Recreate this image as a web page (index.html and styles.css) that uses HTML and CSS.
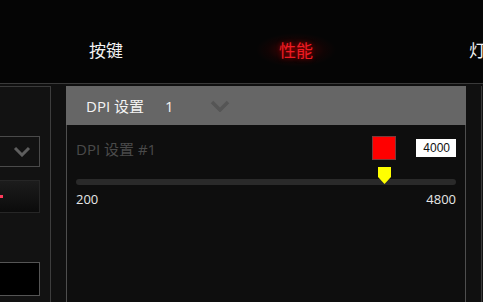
FILE: index.html
```html
<!DOCTYPE html>
<html lang="zh-CN">
<head>
    <meta charset="UTF-8">
    <title>性能</title>
    <link rel="stylesheet" href="styles.css">
</head>
<body>
    <header class="topbar">
        <nav class="tabs">
            <a class="tab">按键</a>
            <a class="tab active">性能</a>
            <a class="tab">灯光</a>
        </nav>
    </header>

    <main class="content">
        <aside class="side">
            <div class="side-select">
                <svg width="18" height="11" viewBox="0 0 18 11"><polyline points="2,2 9,9 16,2" fill="none" stroke="#5e5e5e" stroke-width="3"/></svg>
            </div>
            <div class="side-btn"><span class="dot"></span></div>
            <div class="side-box"></div>
        </aside>

        <section class="panel">
            <div class="panel-head">
                <span class="head-label">DPI 设置</span>
                <span class="head-num">1</span>
                <svg class="head-chev" width="20" height="12" viewBox="0 0 20 12"><polyline points="2,2 10,10 18,2" fill="none" stroke="#555" stroke-width="3.5"/></svg>
            </div>
            <div class="panel-body">
                <div class="dpi-row">
                    <span class="dpi-title">DPI 设置 #1</span>
                    <span class="swatch"></span>
                    <span class="dpi-input">4000</span>
                </div>
                <div class="slider">
                    <div class="track"></div>
                    <svg class="thumb" style="left: 302px;" width="13" height="17" viewBox="0 0 13 17"><polygon points="0,0 13,0 13,10 6.5,17 0,10" fill="#ffff00"/></svg>
                </div>
                <div class="range">
                    <span>200</span>
                    <span>4800</span>
                </div>
            </div>
        </section>

        <aside class="side-right"></aside>
    </main>
</body>
</html>
```

FILE: styles.css
```css
* {
    margin: 0;
    padding: 0;
    box-sizing: border-box;
}

body {
    width: 483px;
    height: 302px;
    overflow: hidden;
    background: #101010;
    font-family: 'Open Sans', 'Noto Sans CJK SC', sans-serif;
    color: #eee;
}

.topbar {
    height: 84px;
    background: #050505;
    border-bottom: 1px solid #3a3a3a;
    overflow: hidden;
}

.tabs {
    display: flex;
    padding: 33px 0 0 11px;
    white-space: nowrap;
}

.tab {
    flex: 0 0 190px;
    text-align: center;
    font-family: 'Noto Sans CJK SC', sans-serif;
    font-size: 17px;
    line-height: 34px;
    color: #f2f2f2;
}

.tab.active {
    color: #ee1c24;
    background: radial-gradient(ellipse 40px 17px at center, rgba(130, 0, 0, 0.55), rgba(60, 0, 0, 0.2) 70%, transparent);
    text-shadow: 0 0 4px rgba(200, 0, 0, 0.6);
}

.content {
    display: flex;
    padding-top: 2px;
    height: 218px;
}

.side {
    flex-shrink: 0;
    width: 51px;
    border-top: 1px solid #3a3a3a;
    border-right: 1px solid #3d3d3d;
    background: #121212;
    padding-top: 49px;
}

.side-select {
    width: 42px;
    height: 31px;
    margin-left: -2px;
    border: 1px solid #4a4a4a;
    display: flex;
    align-items: center;
    justify-content: flex-end;
    padding-right: 8px;
}

.side-btn {
    position: relative;
    width: 42px;
    height: 33px;
    margin: 13px 0 0 -2px;
    border: 1px solid #262626;
    background: linear-gradient(#1c1c1c, #0b0b0b);
}

.dot {
    position: absolute;
    left: 1px;
    top: 14px;
    width: 3px;
    height: 3px;
    background: #ff3a5a;
}

.side-box {
    width: 42px;
    height: 34px;
    margin: 49px 0 0 -2px;
    border: 1px solid #555;
    background: #000;
}

.panel {
    flex-shrink: 0;
    width: 400px;
    margin-left: 15px;
    display: flex;
    flex-direction: column;
}

.panel-head {
    height: 39px;
    background: #666;
    display: flex;
    align-items: center;
    padding-left: 20px;
    font-size: 15px;
}

.head-label {
    color: #f4f4f4;
}

.head-num {
    margin-left: 21px;
    color: #f4f4f4;
}

.head-chev {
    margin-left: 36px;
}

.panel-body {
    flex: 1;
    background: #0e0e0e;
    border-left: 1px solid #4e4e4e;
    border-right: 1px solid #4e4e4e;
    padding: 11px 9px 0 9px;
}

.dpi-row {
    display: flex;
    align-items: center;
    height: 24px;
}

.dpi-title {
    font-size: 15px;
    color: #4a4a4a;
}

.swatch {
    margin-left: auto;
    width: 24px;
    height: 24px;
    background: #ff0000;
    border: 1px solid #7a3a3a;
}

.dpi-input {
    margin-left: 20px;
    width: 40px;
    height: 18px;
    background: #fff;
    color: #111;
    font-family: 'Liberation Sans', sans-serif;
    font-size: 12px;
    line-height: 18px;
    text-align: right;
    padding-right: 6px;
}

.slider {
    position: relative;
    height: 24px;
    margin-top: 7px;
}

.track {
    position: absolute;
    left: 0;
    right: 0;
    top: 12px;
    height: 6px;
    border-radius: 3px;
    background: #2a2a2a;
}

.thumb {
    position: absolute;
    top: 0;
}

.range {
    display: flex;
    justify-content: space-between;
    font-size: 13px;
    color: #e6e6e6;
    line-height: 16px;
}

.side-right {
    flex-shrink: 0;
    width: 18px;
    margin-left: 15px;
    border-left: 1px solid #3a3a3a;
    background: #121212;
}
```
